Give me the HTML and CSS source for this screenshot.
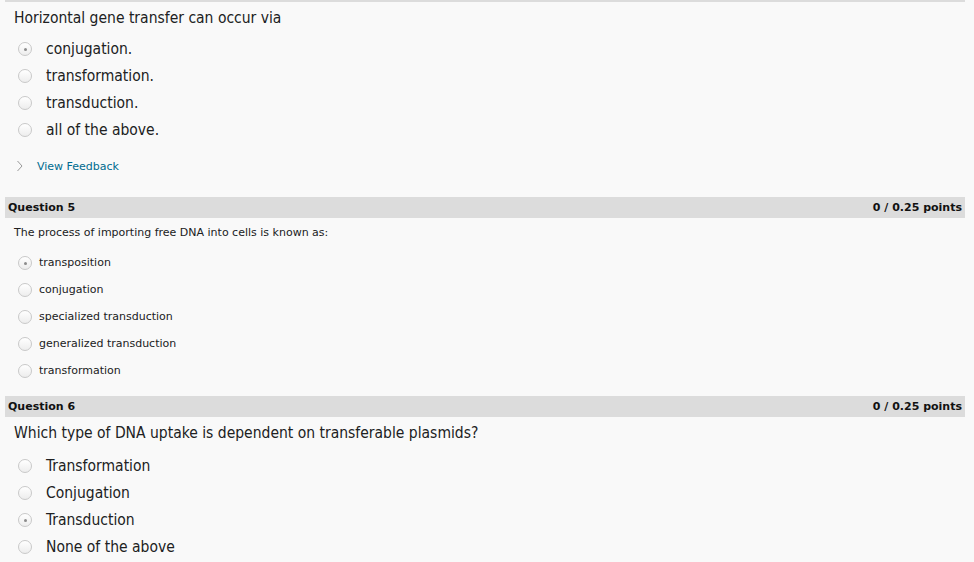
FILE: index.html
```html
<!DOCTYPE html>
<html lang="en">
<head>
  <meta charset="UTF-8">
  <title>Quiz</title>
  <link rel="stylesheet" href="styles.css">
</head>
<body>
  <div class="page">
    <div class="topline"></div>

    <div class="question big">
      <p class="q-text">Horizontal gene transfer can occur via</p>
      <ul class="options">
        <li><span class="radio checked"></span>conjugation.</li>
        <li><span class="radio"></span>transformation.</li>
        <li><span class="radio"></span>transduction.</li>
        <li><span class="radio"></span>all of the above.</li>
      </ul>
      <div class="feedback">
        <svg class="chev" width="8" height="12" viewBox="0 0 8 12"><path d="M1.5 1 L6 6 L1.5 11" fill="none" stroke="#9a9a9a" stroke-width="1"/></svg>
        <a href="#">View Feedback</a>
      </div>
    </div>

    <div class="q-head"><span>Question 5</span><span>0 / 0.25 points</span></div>
    <div class="question small">
      <p class="q-text">The process of importing free DNA into cells is known as:</p>
      <ul class="options">
        <li><span class="radio checked"></span>transposition</li>
        <li><span class="radio"></span>conjugation</li>
        <li><span class="radio"></span>specialized transduction</li>
        <li><span class="radio"></span>generalized transduction</li>
        <li><span class="radio"></span>transformation</li>
      </ul>
    </div>

    <div class="q-head"><span>Question 6</span><span>0 / 0.25 points</span></div>
    <div class="question big q6">
      <p class="q-text">Which type of DNA uptake is dependent on transferable plasmids?</p>
      <ul class="options">
        <li><span class="radio"></span>Transformation</li>
        <li><span class="radio"></span>Conjugation</li>
        <li><span class="radio checked"></span>Transduction</li>
        <li><span class="radio"></span>None of the above</li>
      </ul>
    </div>
  </div>
</body>
</html>
```

FILE: styles.css
```css
body {
  margin: 0;
  background: #f9f9f9;
  font-family: "DejaVu Sans", Verdana, sans-serif;
  color: #202122;
}

.page {
  width: 960px;
  margin-left: 5px;
}

.topline {
  height: 2px;
  background: #dcdcdc;
}

.question {
  padding-left: 9px;
}

.q-text {
  margin: 0;
}

.options {
  list-style: none;
  margin: 0;
  padding: 0;
}

.options li {
  display: flex;
  align-items: center;
}

.radio {
  width: 12px;
  height: 12px;
  border: 1px solid #c9c9c9;
  border-radius: 50%;
  background: linear-gradient(to bottom, #ffffff, #ededed);
  margin-left: 4px;
  position: relative;
  flex: none;
}

.radio.checked::after {
  content: "";
  position: absolute;
  left: 5px;
  top: 5px;
  width: 3px;
  height: 3px;
  border-radius: 50%;
  background: #8c8c8c;
}

/* large font questions */
.big .q-text {
  font-family: "DejaVu Sans Condensed", "DejaVu Sans", sans-serif;
  font-size: 15.5px;
  line-height: 20px;
  padding-top: 6px;
}

.big .options {
  padding-top: 7px;
}

.q6 .options {
  padding-top: 9px;
}

.big .options li {
  height: 27px;
  font-family: "DejaVu Sans Condensed", "DejaVu Sans", sans-serif;
  font-size: 15.5px;
}

.big .radio {
  margin-right: 14px;
}

.feedback {
  display: flex;
  align-items: center;
  height: 20px;
  margin-top: 13px;
  margin-bottom: 21px;
  padding-left: 2px;
}

.feedback a {
  font-size: 11px;
  color: #006b8f;
  text-decoration: none;
  margin-left: 13px;
}

.q-head {
  display: flex;
  justify-content: space-between;
  height: 21px;
  align-items: center;
  background: #dcdcdc;
  font-size: 11px;
  font-weight: bold;
  color: #111;
  padding: 0 3px;
}

.small .q-text {
  font-size: 11px;
  line-height: 14px;
  padding-top: 8px;
}

.small .options {
  padding-top: 9px;
  padding-bottom: 12px;
}

.small .options li {
  height: 27px;
  font-size: 11px;
}

.small .radio {
  margin-right: 7px;
}
```
